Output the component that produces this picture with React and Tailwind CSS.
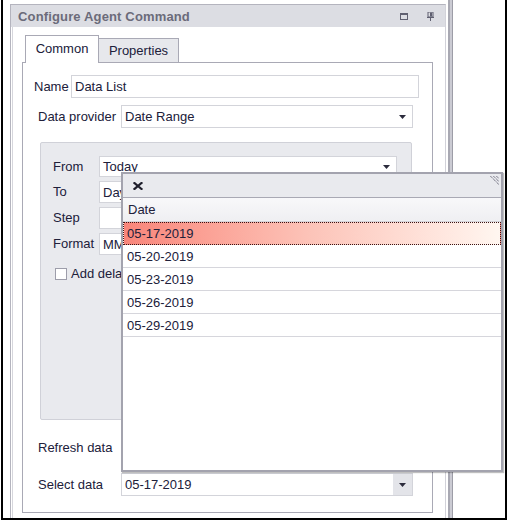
import React from "react";

function Arrow() {
  return (
    <svg width="7" height="4" viewBox="0 0 7 4" className="block">
      <path d="M0 0H7L3.5 4Z" fill="#2b2b3c" />
    </svg>
  );
}

function Combo({ value, width, h = "h-[23px]", button = false }) {
  return (
    <div className={`flex items-center bg-white border border-[#d3d4da] ${h} ${width}`}>
      <span className="flex-1 pl-[3px] leading-none">{value}</span>
      {button ? (
        <div className="w-[19px] h-full bg-[#e3e4e9] flex items-center justify-center">
          <Arrow />
        </div>
      ) : (
        <div className="w-[19px] h-full flex items-center justify-center">
          <Arrow />
        </div>
      )}
    </div>
  );
}

function Field({ value, width, h = "h-[22px]" }) {
  return (
    <div className={`flex items-center bg-white border border-[#d3d4da] ${h} ${width}`}>
      <span className="pl-[3px] leading-none">{value}</span>
    </div>
  );
}

export default function App() {
  const rows = ["05-20-2019", "05-23-2019", "05-26-2019", "05-29-2019"];
  return (
    <div className="w-[509px] h-[524px] bg-white overflow-hidden relative font-['Liberation_Sans',Arial,sans-serif] text-[13px] text-[#20203a]">
      <div className="ml-px w-[506px] h-[520px] border-l-2 border-r-2 border-b-2 border-black flex">
        {/* Panel */}
        <div className="ml-[7px] mt-[4px] w-[436px] flex flex-col border-l border-t border-[#b4b4be] border-r border-r-[#d2d2d9]">
          {/* Title */}
          <div className="h-[22px] bg-[#dcdde3] flex items-center pl-[7px] pr-[10px] shrink-0">
            <span className="flex-1 font-bold text-[#6b6b7a] text-[13px] leading-none tracking-[0.15px]">Configure Agent Command</span>
            <svg width="8" height="7" viewBox="0 0 8 7" className="block mr-[19px]">
              <rect x="0.5" y="0.5" width="7" height="6" fill="none" stroke="#5f5f70" />
              <rect x="0" y="0" width="8" height="2" fill="#5f5f70" />
            </svg>
            <svg width="7" height="9" viewBox="0 0 7 9" className="block mr-[1px]">
              <rect x="1" y="0" width="5" height="5" fill="none" stroke="#5f5f70" strokeWidth="1" />
              <rect x="3" y="0.5" width="2" height="4" fill="#5f5f70" />
              <rect x="0" y="5" width="7" height="1" fill="#5f5f70" />
              <rect x="3" y="6" width="1" height="3" fill="#5f5f70" />
            </svg>
          </div>
          {/* Body */}
          <div className="flex-1 ml-px border-l border-[#d6d6dc] bg-white pl-[9px] pt-[8px]">
            {/* Tabs strip */}
            <div className="flex items-end h-[28px] -mb-px relative z-10">
              <div className="ml-[3px] w-[74px] h-[28px] bg-white border-l border-t border-r border-[#a9a9b5] flex items-center justify-center pb-[1px]">
                Common
              </div>
              <div className="w-[80px] h-[25px] bg-[#e7e8ec] border-t border-r border-b border-[#a9a9b5] flex items-center justify-center">
                Properties
              </div>
            </div>
            {/* Tab content */}
            <div className="w-[411px] h-[451px] border border-[#a9a9b5] bg-white flex flex-col">
              {/* Name */}
              <div className="flex items-center mt-[12px] pl-[11px]">
                <span className="w-[37px]">Name</span>
                <Field value="Data List" width="w-[348px]" h="h-[23px]" />
              </div>
              {/* Data provider */}
              <div className="flex items-center mt-[7px] pl-[15px]">
                <span className="w-[83px]">Data provider</span>
                <Combo value="Date Range" width="w-[292px]" />
              </div>
              {/* Group box */}
              <div className="ml-[17px] mt-[14px] w-[372px] h-[278px] bg-[#e9eaee] border border-[#d0d1d8] rounded-[2px] pt-[13px] pl-[12px] flex flex-col gap-[4px]">
                <div className="flex items-center">
                  <span className="w-[46px]">From</span>
                  <Combo value="Today" width="w-[298px]" h="h-[21px]" />
                </div>
                <div className="flex items-center">
                  <span className="w-[46px]">To</span>
                  <Field value="Days" width="w-[298px]" />
                </div>
                <div className="flex items-center">
                  <span className="w-[46px]">Step</span>
                  <Field value="" width="w-[298px]" />
                </div>
                <div className="flex items-center">
                  <span className="w-[46px]">Format</span>
                  <Field value="MM-dd-yyyy" width="w-[298px]" />
                </div>
                <div className="flex items-center mt-[5px] ml-[2px]">
                  <div className="w-[12px] h-[12px] border border-[#9d9daa] bg-white" />
                  <span className="ml-[4px]">Add delay</span>
                </div>
              </div>
              {/* Refresh data */}
              <div className="flex items-center mt-[16px] pl-[15px] h-[23px]">
                <span className="w-[83px]">Refresh data</span>
              </div>
              {/* Select data */}
              <div className="flex items-center mt-[14px] pl-[15px]">
                <span className="w-[83px]">Select data</span>
                <Combo value="05-17-2019" width="w-[292px]" button />
              </div>
            </div>
          </div>
        </div>
        {/* Splitter */}
        <div className="ml-[2px] flex h-full">
          <div className="w-[2px] bg-[#a9a9b3]" />
          <div className="w-[2px] bg-[#cbcbd3]" />
          <div className="w-[1px] bg-[#9d9da7]" />
        </div>
      </div>

      {/* Dropdown popup */}
      <div className="absolute left-[121px] top-[172px] w-[382px] h-[300px] border-2 border-[#a3a3ae] bg-white flex flex-col shadow-[1px_1px_1px_rgba(0,0,0,0.25)]">
        <div className="h-[24px] bg-[#e9eaee] border-b border-[#a9a9b4] flex items-center pl-[10px] pr-[2px] shrink-0">
          <svg width="10" height="8" viewBox="0 0 10 8" className="block">
            <path d="M1.5 1L8.5 7M8.5 1L1.5 7" stroke="#1f1f2c" strokeWidth="2.2" strokeLinecap="square" />
          </svg>
          <span className="flex-1" />
          <svg width="11" height="11" viewBox="0 0 11 11" className="block self-start mt-[2px]">
            <path d="M2 0L11 9M5 0L11 6M8 0L11 3" stroke="#7d7d8a" strokeWidth="1" strokeDasharray="1 1" />
            <path d="M3 0L11 8M6 0L11 5M9 0L11 2" stroke="#b8b8c2" strokeWidth="0.8" />
          </svg>
        </div>
        <div className="h-[24px] bg-gradient-to-b from-[#f8f8fa] to-[#efeff2] border-b border-[#d4d4da] flex items-center pl-[5px] shrink-0">
          Date
        </div>
        <div className="h-[23px] border border-dotted border-[#3a1414] bg-gradient-to-r from-[#f8857a] via-[#fcc4b9] to-[#fff6f0] flex items-center pl-[3px] pt-px shrink-0">
          05-17-2019
        </div>
        {rows.map((r) => (
          <div key={r} className="h-[23px] border-b border-[#d6d6dc] flex items-center pl-[4px] pt-[2px] shrink-0">
            {r}
          </div>
        ))}
      </div>
    </div>
  );
}
